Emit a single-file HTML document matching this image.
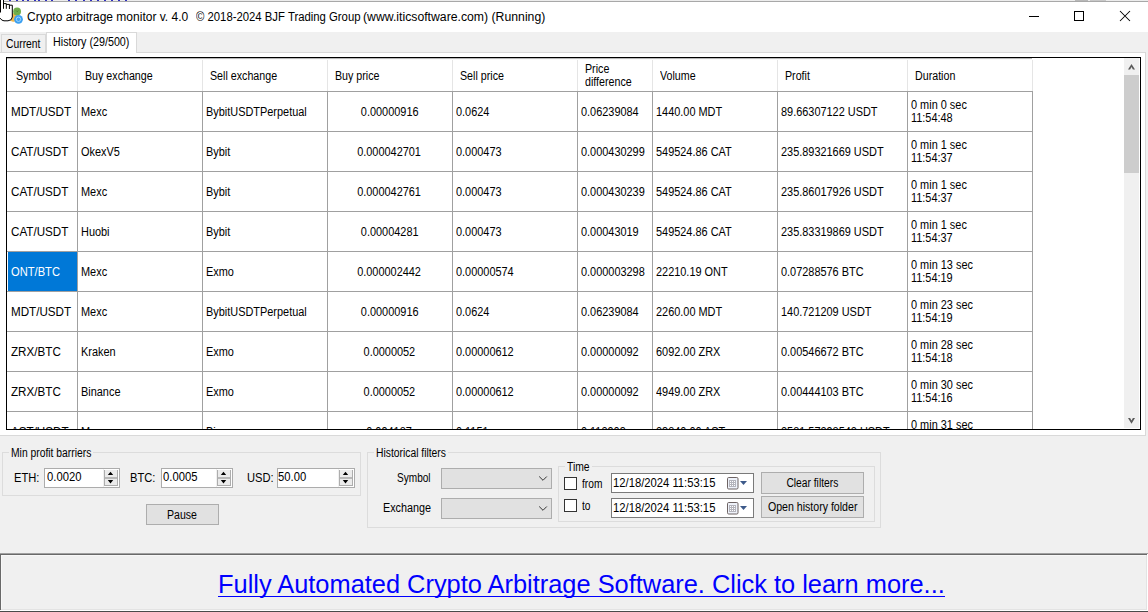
<!DOCTYPE html><html><head><meta charset="utf-8"><style>
*{margin:0;padding:0;box-sizing:border-box}
html,body{width:1148px;height:612px;overflow:hidden;background:#f0f0f0;font-family:"Liberation Sans", sans-serif;color:#000}
.a{position:absolute}
</style></head><body>

<div class="a" style="left:0px;top:0px;width:1148px;height:32px;background:#fff;"></div>
<div class="a" style="left:0px;top:1px;width:1148px;height:1px;background:#c8c8c8;"></div>
<div class="a" style="left:27px;top:11px;line-height:12px;font-size:12px;color:#000;white-space:pre;transform:scaleX(1.0);transform-origin:0 0;">Crypto arbitrage monitor v. 4.0</div>
<div class="a" style="left:196px;top:11px;line-height:12px;font-size:12px;color:#000;white-space:pre;transform:scaleX(0.944);transform-origin:0 0;">© 2018-2024 BJF Trading Group</div>
<div class="a" style="left:363px;top:11px;line-height:12px;font-size:12px;color:#000;white-space:pre;transform:scaleX(1.02);transform-origin:0 0;">(www.iticsoftware.com) (Running)</div>
<div class="a" style="left:1029px;top:16px;width:10px;height:1px;background:#000;"></div>
<div class="a" style="left:1074px;top:11px;width:10px;height:10px;border:1px solid #000;"></div>
<svg class="a" style="left:1119px;top:10px" width="12" height="12"><path d="M1 1L11 11M11 1L1 11" stroke="#000" stroke-width="1.05"/></svg>
<div class="a" style="left:0px;top:0px;width:1148px;height:1px;background:#ececec;"></div>
<div class="a" style="left:0px;top:1px;width:1148px;height:1px;background:#a8a8a8;"></div>
<div class="a" style="left:9px;top:0px;width:2px;height:1px;background:#3030c0;"></div>
<div class="a" style="left:16px;top:0px;width:2px;height:1px;background:#3030c0;"></div>
<div class="a" style="left:22px;top:0px;width:2px;height:1px;background:#3030c0;"></div>
<div class="a" style="left:27px;top:0px;width:2px;height:1px;background:#3030c0;"></div>
<div class="a" style="left:34px;top:0px;width:2px;height:1px;background:#3030c0;"></div>
<div class="a" style="left:38px;top:0px;width:2px;height:1px;background:#3030c0;"></div>
<div class="a" style="left:45px;top:0px;width:2px;height:1px;background:#3030c0;"></div>
<div class="a" style="left:51px;top:0px;width:2px;height:1px;background:#3030c0;"></div>
<div class="a" style="left:68px;top:0px;width:2px;height:1px;background:#3030c0;"></div>
<div class="a" style="left:75px;top:0px;width:2px;height:1px;background:#3030c0;"></div>
<div class="a" style="left:83px;top:0px;width:2px;height:1px;background:#3030c0;"></div>
<div class="a" style="left:90px;top:0px;width:2px;height:1px;background:#3030c0;"></div>
<div class="a" style="left:97px;top:0px;width:2px;height:1px;background:#3030c0;"></div>
<div class="a" style="left:104px;top:0px;width:2px;height:1px;background:#3030c0;"></div>
<div class="a" style="left:111px;top:0px;width:2px;height:1px;background:#3030c0;"></div>
<div class="a" style="left:118px;top:0px;width:2px;height:1px;background:#3030c0;"></div>
<div class="a" style="left:125px;top:0px;width:2px;height:1px;background:#3030c0;"></div>
<div class="a" style="left:1075px;top:0px;width:13px;height:1px;background:#b8b8b8;"></div>
<div class="a" style="left:1090px;top:0px;width:16px;height:1px;background:#c8c8c8;"></div>
<svg class="a" style="left:0;top:0" width="26" height="26">
<circle cx="13.5" cy="17.5" r="4.2" fill="#f2b84a"/>
<circle cx="17.1" cy="11.5" r="3.9" fill="#6fae4a"/>
<path d="M16 10.5l1.2 1.2l1.2-1.2" stroke="#4a7a30" stroke-width="0.8" fill="none"/>
<circle cx="18.5" cy="19.3" r="4.4" fill="#3ca0f0"/>
<circle cx="18.5" cy="19.3" r="2.2" fill="none" stroke="#a8d8ff" stroke-width="0.9"/>
<path d="M0 0H3.5V3.6H6.3V4.4H9.4V5.2H12.3V17Q12 20.6 8 20.8H4Q2 20.8 0 18.2Z" fill="#fff"/>
<path d="M0.5 0V12.5 M3.5 0V8.8 M3.5 3.6H6.3V8.8 M6.3 4.4H9.4V9 M9.4 5.2H12.3V17 Q12 20.6 8 20.8 H4 Q2 20.8 0 18.2" stroke="#000" stroke-width="1" fill="none"/>
</svg>
<div class="a" style="left:0px;top:52px;width:1146px;height:384px;background:#fff;border:1px solid #d9d9d9;border-left:none"></div>
<div class="a" style="left:1px;top:34px;width:45px;height:18px;background:#f0f0f0;border:1px solid #d9d9d9;border-bottom:none"></div>
<div class="a" style="left:6px;top:38px;line-height:12px;font-size:12px;color:#000;white-space:pre;transform:scaleX(0.86);transform-origin:0 0;">Current</div>
<div class="a" style="left:46px;top:32px;width:91px;height:21px;background:#fff;border:1px solid #d9d9d9;border-bottom:none"></div>
<div class="a" style="left:53px;top:36px;line-height:12px;font-size:12px;color:#000;white-space:pre;transform:scaleX(0.895);transform-origin:0 0;">History (29/500)</div>
<div class="a" style="left:6px;top:57px;width:1135px;height:373px;background:#fff;border:1px solid #000"></div>
<div class="a" style="left:7px;top:58px;width:1025px;height:1px;background:#b8b8b8;"></div>
<div class="a" style="left:7px;top:59px;width:1025px;height:1px;background:#fafafa;"></div>
<div class="a" style="left:77px;top:60px;width:1px;height:31px;background:#e5e5e5;"></div>
<div class="a" style="left:77px;top:91px;width:1px;height:338px;background:#a0a0a0;"></div>
<div class="a" style="left:202px;top:60px;width:1px;height:31px;background:#e5e5e5;"></div>
<div class="a" style="left:202px;top:91px;width:1px;height:338px;background:#a0a0a0;"></div>
<div class="a" style="left:327px;top:60px;width:1px;height:31px;background:#e5e5e5;"></div>
<div class="a" style="left:327px;top:91px;width:1px;height:338px;background:#a0a0a0;"></div>
<div class="a" style="left:452px;top:60px;width:1px;height:31px;background:#e5e5e5;"></div>
<div class="a" style="left:452px;top:91px;width:1px;height:338px;background:#a0a0a0;"></div>
<div class="a" style="left:577px;top:60px;width:1px;height:31px;background:#e5e5e5;"></div>
<div class="a" style="left:577px;top:91px;width:1px;height:338px;background:#a0a0a0;"></div>
<div class="a" style="left:652px;top:60px;width:1px;height:31px;background:#e5e5e5;"></div>
<div class="a" style="left:652px;top:91px;width:1px;height:338px;background:#a0a0a0;"></div>
<div class="a" style="left:777px;top:60px;width:1px;height:31px;background:#e5e5e5;"></div>
<div class="a" style="left:777px;top:91px;width:1px;height:338px;background:#a0a0a0;"></div>
<div class="a" style="left:907px;top:60px;width:1px;height:31px;background:#e5e5e5;"></div>
<div class="a" style="left:907px;top:91px;width:1px;height:338px;background:#a0a0a0;"></div>
<div class="a" style="left:1032px;top:60px;width:1px;height:31px;background:#e5e5e5;"></div>
<div class="a" style="left:1032px;top:91px;width:1px;height:338px;background:#a0a0a0;"></div>
<div class="a" style="left:7px;top:91px;width:1026px;height:1px;background:#a0a0a0;"></div>
<div class="a" style="left:7px;top:131px;width:1026px;height:1px;background:#a0a0a0;"></div>
<div class="a" style="left:7px;top:171px;width:1026px;height:1px;background:#a0a0a0;"></div>
<div class="a" style="left:7px;top:211px;width:1026px;height:1px;background:#a0a0a0;"></div>
<div class="a" style="left:7px;top:251px;width:1026px;height:1px;background:#a0a0a0;"></div>
<div class="a" style="left:7px;top:291px;width:1026px;height:1px;background:#a0a0a0;"></div>
<div class="a" style="left:7px;top:331px;width:1026px;height:1px;background:#a0a0a0;"></div>
<div class="a" style="left:7px;top:371px;width:1026px;height:1px;background:#a0a0a0;"></div>
<div class="a" style="left:7px;top:411px;width:1026px;height:1px;background:#a0a0a0;"></div>
<div class="a" style="left:16px;top:70px;line-height:12px;font-size:12px;color:#000;white-space:pre;transform:scaleX(0.89);transform-origin:0 0;">Symbol</div>
<div class="a" style="left:85px;top:70px;line-height:12px;font-size:12px;color:#000;white-space:pre;transform:scaleX(0.89);transform-origin:0 0;">Buy exchange</div>
<div class="a" style="left:210px;top:70px;line-height:12px;font-size:12px;color:#000;white-space:pre;transform:scaleX(0.89);transform-origin:0 0;">Sell exchange</div>
<div class="a" style="left:335px;top:70px;line-height:12px;font-size:12px;color:#000;white-space:pre;transform:scaleX(0.89);transform-origin:0 0;">Buy price</div>
<div class="a" style="left:460px;top:70px;line-height:12px;font-size:12px;color:#000;white-space:pre;transform:scaleX(0.89);transform-origin:0 0;">Sell price</div>
<div class="a" style="left:585px;top:63px;line-height:13px;font-size:12px;color:#000;white-space:pre;transform:scaleX(0.89);transform-origin:0 0;">Price
difference</div>
<div class="a" style="left:660px;top:70px;line-height:12px;font-size:12px;color:#000;white-space:pre;transform:scaleX(0.89);transform-origin:0 0;">Volume</div>
<div class="a" style="left:785px;top:70px;line-height:12px;font-size:12px;color:#000;white-space:pre;transform:scaleX(0.89);transform-origin:0 0;">Profit</div>
<div class="a" style="left:915px;top:70px;line-height:12px;font-size:12px;color:#000;white-space:pre;transform:scaleX(0.89);transform-origin:0 0;">Duration</div>
<div class="a" style="left:8px;top:252px;width:69px;height:39px;background:#0078d7;"></div>
<div class="a" style="left:7px;top:58px;width:1133px;height:371px;overflow:hidden"><div class="a" style="left:-7px;top:-58px;width:1148px;height:612px">
<div class="a" style="left:10.5px;top:106px;line-height:12px;font-size:12px;color:#000;white-space:pre;transform:scaleX(0.97);transform-origin:0 0;">MDT/USDT</div>
<div class="a" style="left:81px;top:106px;line-height:12px;font-size:12px;color:#000;white-space:pre;transform:scaleX(0.91);transform-origin:0 0;">Mexc</div>
<div class="a" style="left:206px;top:106px;line-height:12px;font-size:12px;color:#000;white-space:pre;transform:scaleX(0.91);transform-origin:0 0;">BybitUSDTPerpetual</div>
<div class="a" style="left:327px;top:106px;width:125px;text-align:center;line-height:12px;font-size:12px;color:#000;white-space:pre;"><span style="display:inline-block;transform:scaleX(0.91);transform-origin:50% 0">0.00000916</span></div>
<div class="a" style="left:456px;top:106px;line-height:12px;font-size:12px;color:#000;white-space:pre;transform:scaleX(0.91);transform-origin:0 0;">0.0624</div>
<div class="a" style="left:581px;top:106px;line-height:12px;font-size:12px;color:#000;white-space:pre;transform:scaleX(0.91);transform-origin:0 0;">0.06239084</div>
<div class="a" style="left:656px;top:106px;line-height:12px;font-size:12px;color:#000;white-space:pre;transform:scaleX(0.91);transform-origin:0 0;">1440.00 MDT</div>
<div class="a" style="left:781px;top:106px;line-height:12px;font-size:12px;color:#000;white-space:pre;transform:scaleX(0.91);transform-origin:0 0;">89.66307122 USDT</div>
<div class="a" style="left:911px;top:99px;line-height:13px;font-size:12px;color:#000;white-space:pre;transform:scaleX(0.91);transform-origin:0 0;">0 min 0 sec
11:54:48</div>
<div class="a" style="left:10.5px;top:146px;line-height:12px;font-size:12px;color:#000;white-space:pre;transform:scaleX(0.97);transform-origin:0 0;">CAT/USDT</div>
<div class="a" style="left:81px;top:146px;line-height:12px;font-size:12px;color:#000;white-space:pre;transform:scaleX(0.91);transform-origin:0 0;">OkexV5</div>
<div class="a" style="left:206px;top:146px;line-height:12px;font-size:12px;color:#000;white-space:pre;transform:scaleX(0.91);transform-origin:0 0;">Bybit</div>
<div class="a" style="left:327px;top:146px;width:125px;text-align:center;line-height:12px;font-size:12px;color:#000;white-space:pre;"><span style="display:inline-block;transform:scaleX(0.91);transform-origin:50% 0">0.000042701</span></div>
<div class="a" style="left:456px;top:146px;line-height:12px;font-size:12px;color:#000;white-space:pre;transform:scaleX(0.91);transform-origin:0 0;">0.000473</div>
<div class="a" style="left:581px;top:146px;line-height:12px;font-size:12px;color:#000;white-space:pre;transform:scaleX(0.91);transform-origin:0 0;">0.000430299</div>
<div class="a" style="left:656px;top:146px;line-height:12px;font-size:12px;color:#000;white-space:pre;transform:scaleX(0.91);transform-origin:0 0;">549524.86 CAT</div>
<div class="a" style="left:781px;top:146px;line-height:12px;font-size:12px;color:#000;white-space:pre;transform:scaleX(0.91);transform-origin:0 0;">235.89321669 USDT</div>
<div class="a" style="left:911px;top:139px;line-height:13px;font-size:12px;color:#000;white-space:pre;transform:scaleX(0.91);transform-origin:0 0;">0 min 1 sec
11:54:37</div>
<div class="a" style="left:10.5px;top:186px;line-height:12px;font-size:12px;color:#000;white-space:pre;transform:scaleX(0.97);transform-origin:0 0;">CAT/USDT</div>
<div class="a" style="left:81px;top:186px;line-height:12px;font-size:12px;color:#000;white-space:pre;transform:scaleX(0.91);transform-origin:0 0;">Mexc</div>
<div class="a" style="left:206px;top:186px;line-height:12px;font-size:12px;color:#000;white-space:pre;transform:scaleX(0.91);transform-origin:0 0;">Bybit</div>
<div class="a" style="left:327px;top:186px;width:125px;text-align:center;line-height:12px;font-size:12px;color:#000;white-space:pre;"><span style="display:inline-block;transform:scaleX(0.91);transform-origin:50% 0">0.000042761</span></div>
<div class="a" style="left:456px;top:186px;line-height:12px;font-size:12px;color:#000;white-space:pre;transform:scaleX(0.91);transform-origin:0 0;">0.000473</div>
<div class="a" style="left:581px;top:186px;line-height:12px;font-size:12px;color:#000;white-space:pre;transform:scaleX(0.91);transform-origin:0 0;">0.000430239</div>
<div class="a" style="left:656px;top:186px;line-height:12px;font-size:12px;color:#000;white-space:pre;transform:scaleX(0.91);transform-origin:0 0;">549524.86 CAT</div>
<div class="a" style="left:781px;top:186px;line-height:12px;font-size:12px;color:#000;white-space:pre;transform:scaleX(0.91);transform-origin:0 0;">235.86017926 USDT</div>
<div class="a" style="left:911px;top:179px;line-height:13px;font-size:12px;color:#000;white-space:pre;transform:scaleX(0.91);transform-origin:0 0;">0 min 1 sec
11:54:37</div>
<div class="a" style="left:10.5px;top:226px;line-height:12px;font-size:12px;color:#000;white-space:pre;transform:scaleX(0.97);transform-origin:0 0;">CAT/USDT</div>
<div class="a" style="left:81px;top:226px;line-height:12px;font-size:12px;color:#000;white-space:pre;transform:scaleX(0.91);transform-origin:0 0;">Huobi</div>
<div class="a" style="left:206px;top:226px;line-height:12px;font-size:12px;color:#000;white-space:pre;transform:scaleX(0.91);transform-origin:0 0;">Bybit</div>
<div class="a" style="left:327px;top:226px;width:125px;text-align:center;line-height:12px;font-size:12px;color:#000;white-space:pre;"><span style="display:inline-block;transform:scaleX(0.91);transform-origin:50% 0">0.00004281</span></div>
<div class="a" style="left:456px;top:226px;line-height:12px;font-size:12px;color:#000;white-space:pre;transform:scaleX(0.91);transform-origin:0 0;">0.000473</div>
<div class="a" style="left:581px;top:226px;line-height:12px;font-size:12px;color:#000;white-space:pre;transform:scaleX(0.91);transform-origin:0 0;">0.00043019</div>
<div class="a" style="left:656px;top:226px;line-height:12px;font-size:12px;color:#000;white-space:pre;transform:scaleX(0.91);transform-origin:0 0;">549524.86 CAT</div>
<div class="a" style="left:781px;top:226px;line-height:12px;font-size:12px;color:#000;white-space:pre;transform:scaleX(0.91);transform-origin:0 0;">235.83319869 USDT</div>
<div class="a" style="left:911px;top:219px;line-height:13px;font-size:12px;color:#000;white-space:pre;transform:scaleX(0.91);transform-origin:0 0;">0 min 1 sec
11:54:37</div>
<div class="a" style="left:10.5px;top:266px;line-height:12px;font-size:12px;color:#fff;white-space:pre;transform:scaleX(0.93);transform-origin:0 0;">ONT/BTC</div>
<div class="a" style="left:81px;top:266px;line-height:12px;font-size:12px;color:#000;white-space:pre;transform:scaleX(0.91);transform-origin:0 0;">Mexc</div>
<div class="a" style="left:206px;top:266px;line-height:12px;font-size:12px;color:#000;white-space:pre;transform:scaleX(0.91);transform-origin:0 0;">Exmo</div>
<div class="a" style="left:327px;top:266px;width:125px;text-align:center;line-height:12px;font-size:12px;color:#000;white-space:pre;"><span style="display:inline-block;transform:scaleX(0.91);transform-origin:50% 0">0.000002442</span></div>
<div class="a" style="left:456px;top:266px;line-height:12px;font-size:12px;color:#000;white-space:pre;transform:scaleX(0.91);transform-origin:0 0;">0.00000574</div>
<div class="a" style="left:581px;top:266px;line-height:12px;font-size:12px;color:#000;white-space:pre;transform:scaleX(0.91);transform-origin:0 0;">0.000003298</div>
<div class="a" style="left:656px;top:266px;line-height:12px;font-size:12px;color:#000;white-space:pre;transform:scaleX(0.91);transform-origin:0 0;">22210.19 ONT</div>
<div class="a" style="left:781px;top:266px;line-height:12px;font-size:12px;color:#000;white-space:pre;transform:scaleX(0.91);transform-origin:0 0;">0.07288576 BTC</div>
<div class="a" style="left:911px;top:259px;line-height:13px;font-size:12px;color:#000;white-space:pre;transform:scaleX(0.91);transform-origin:0 0;">0 min 13 sec
11:54:19</div>
<div class="a" style="left:10.5px;top:306px;line-height:12px;font-size:12px;color:#000;white-space:pre;transform:scaleX(0.97);transform-origin:0 0;">MDT/USDT</div>
<div class="a" style="left:81px;top:306px;line-height:12px;font-size:12px;color:#000;white-space:pre;transform:scaleX(0.91);transform-origin:0 0;">Mexc</div>
<div class="a" style="left:206px;top:306px;line-height:12px;font-size:12px;color:#000;white-space:pre;transform:scaleX(0.91);transform-origin:0 0;">BybitUSDTPerpetual</div>
<div class="a" style="left:327px;top:306px;width:125px;text-align:center;line-height:12px;font-size:12px;color:#000;white-space:pre;"><span style="display:inline-block;transform:scaleX(0.91);transform-origin:50% 0">0.00000916</span></div>
<div class="a" style="left:456px;top:306px;line-height:12px;font-size:12px;color:#000;white-space:pre;transform:scaleX(0.91);transform-origin:0 0;">0.0624</div>
<div class="a" style="left:581px;top:306px;line-height:12px;font-size:12px;color:#000;white-space:pre;transform:scaleX(0.91);transform-origin:0 0;">0.06239084</div>
<div class="a" style="left:656px;top:306px;line-height:12px;font-size:12px;color:#000;white-space:pre;transform:scaleX(0.91);transform-origin:0 0;">2260.00 MDT</div>
<div class="a" style="left:781px;top:306px;line-height:12px;font-size:12px;color:#000;white-space:pre;transform:scaleX(0.91);transform-origin:0 0;">140.721209 USDT</div>
<div class="a" style="left:911px;top:299px;line-height:13px;font-size:12px;color:#000;white-space:pre;transform:scaleX(0.91);transform-origin:0 0;">0 min 23 sec
11:54:19</div>
<div class="a" style="left:10.5px;top:346px;line-height:12px;font-size:12px;color:#000;white-space:pre;transform:scaleX(0.97);transform-origin:0 0;">ZRX/BTC</div>
<div class="a" style="left:81px;top:346px;line-height:12px;font-size:12px;color:#000;white-space:pre;transform:scaleX(0.91);transform-origin:0 0;">Kraken</div>
<div class="a" style="left:206px;top:346px;line-height:12px;font-size:12px;color:#000;white-space:pre;transform:scaleX(0.91);transform-origin:0 0;">Exmo</div>
<div class="a" style="left:327px;top:346px;width:125px;text-align:center;line-height:12px;font-size:12px;color:#000;white-space:pre;"><span style="display:inline-block;transform:scaleX(0.91);transform-origin:50% 0">0.0000052</span></div>
<div class="a" style="left:456px;top:346px;line-height:12px;font-size:12px;color:#000;white-space:pre;transform:scaleX(0.91);transform-origin:0 0;">0.00000612</div>
<div class="a" style="left:581px;top:346px;line-height:12px;font-size:12px;color:#000;white-space:pre;transform:scaleX(0.91);transform-origin:0 0;">0.00000092</div>
<div class="a" style="left:656px;top:346px;line-height:12px;font-size:12px;color:#000;white-space:pre;transform:scaleX(0.91);transform-origin:0 0;">6092.00 ZRX</div>
<div class="a" style="left:781px;top:346px;line-height:12px;font-size:12px;color:#000;white-space:pre;transform:scaleX(0.91);transform-origin:0 0;">0.00546672 BTC</div>
<div class="a" style="left:911px;top:339px;line-height:13px;font-size:12px;color:#000;white-space:pre;transform:scaleX(0.91);transform-origin:0 0;">0 min 28 sec
11:54:18</div>
<div class="a" style="left:10.5px;top:386px;line-height:12px;font-size:12px;color:#000;white-space:pre;transform:scaleX(0.97);transform-origin:0 0;">ZRX/BTC</div>
<div class="a" style="left:81px;top:386px;line-height:12px;font-size:12px;color:#000;white-space:pre;transform:scaleX(0.91);transform-origin:0 0;">Binance</div>
<div class="a" style="left:206px;top:386px;line-height:12px;font-size:12px;color:#000;white-space:pre;transform:scaleX(0.91);transform-origin:0 0;">Exmo</div>
<div class="a" style="left:327px;top:386px;width:125px;text-align:center;line-height:12px;font-size:12px;color:#000;white-space:pre;"><span style="display:inline-block;transform:scaleX(0.91);transform-origin:50% 0">0.0000052</span></div>
<div class="a" style="left:456px;top:386px;line-height:12px;font-size:12px;color:#000;white-space:pre;transform:scaleX(0.91);transform-origin:0 0;">0.00000612</div>
<div class="a" style="left:581px;top:386px;line-height:12px;font-size:12px;color:#000;white-space:pre;transform:scaleX(0.91);transform-origin:0 0;">0.00000092</div>
<div class="a" style="left:656px;top:386px;line-height:12px;font-size:12px;color:#000;white-space:pre;transform:scaleX(0.91);transform-origin:0 0;">4949.00 ZRX</div>
<div class="a" style="left:781px;top:386px;line-height:12px;font-size:12px;color:#000;white-space:pre;transform:scaleX(0.91);transform-origin:0 0;">0.00444103 BTC</div>
<div class="a" style="left:911px;top:379px;line-height:13px;font-size:12px;color:#000;white-space:pre;transform:scaleX(0.91);transform-origin:0 0;">0 min 30 sec
11:54:16</div>
<div class="a" style="left:10.5px;top:426px;line-height:12px;font-size:12px;color:#000;white-space:pre;transform:scaleX(0.97);transform-origin:0 0;">AST/USDT</div>
<div class="a" style="left:81px;top:426px;line-height:12px;font-size:12px;color:#000;white-space:pre;transform:scaleX(0.91);transform-origin:0 0;">Mexc</div>
<div class="a" style="left:206px;top:426px;line-height:12px;font-size:12px;color:#000;white-space:pre;transform:scaleX(0.91);transform-origin:0 0;">Binance</div>
<div class="a" style="left:327px;top:426px;width:125px;text-align:center;line-height:12px;font-size:12px;color:#000;white-space:pre;"><span style="display:inline-block;transform:scaleX(0.91);transform-origin:50% 0">0.094187</span></div>
<div class="a" style="left:456px;top:426px;line-height:12px;font-size:12px;color:#000;white-space:pre;transform:scaleX(0.91);transform-origin:0 0;">0.1151</div>
<div class="a" style="left:581px;top:426px;line-height:12px;font-size:12px;color:#000;white-space:pre;transform:scaleX(0.91);transform-origin:0 0;">0.112903</div>
<div class="a" style="left:656px;top:426px;line-height:12px;font-size:12px;color:#000;white-space:pre;transform:scaleX(0.91);transform-origin:0 0;">23840.00 AST</div>
<div class="a" style="left:781px;top:426px;line-height:12px;font-size:12px;color:#000;white-space:pre;transform:scaleX(0.91);transform-origin:0 0;">2581.57298542 USDT</div>
<div class="a" style="left:911px;top:419px;line-height:13px;font-size:12px;color:#000;white-space:pre;transform:scaleX(0.91);transform-origin:0 0;">0 min 31 sec
11:54:14</div>
</div></div>
<div class="a" style="left:1124px;top:58px;width:15px;height:370px;background:#f0f0f0;"></div>
<div class="a" style="left:1124px;top:75px;width:15px;height:98px;background:#cdcdcd;"></div>
<svg class="a" style="left:1124px;top:62px" width="15" height="9"><path d="M4 7.6L7.5 1.9L11 7.6L8.9 7.6L7.5 5.1L6.1 7.6Z" fill="#5a5a5a"/></svg>
<svg class="a" style="left:1124px;top:416px" width="15" height="9"><path d="M4 2.1L7.5 7.8L11 2.1L8.9 2.1L7.5 4.6L6.1 2.1Z" fill="#5a5a5a"/></svg>
<div class="a" style="left:2px;top:452px;width:359px;height:44px;border:1px solid #dcdcdc;"></div>
<div class="a" style="left:9px;top:446px;width:84px;height:12px;background:#f0f0f0;"></div>
<div class="a" style="left:11px;top:447px;line-height:12px;font-size:12px;color:#000;white-space:pre;transform:scaleX(0.86);transform-origin:0 0;">Min profit barriers</div>
<div class="a" style="left:14px;top:472px;line-height:12px;font-size:12px;color:#000;white-space:pre;transform:scaleX(0.93);transform-origin:0 0;">ETH:</div>
<div class="a" style="left:44px;top:468px;width:76px;height:20px;background:#fff;border:1px solid #acacac;"></div>
<div class="a" style="left:47px;top:471px;line-height:12px;font-size:12.5px;color:#000;white-space:pre;transform:scaleX(0.9);transform-origin:0 0;">0.0020</div>
<div class="a" style="left:103px;top:469px;width:1px;height:18px;background:#f0f0f0;"></div>
<div class="a" style="left:104px;top:470px;width:14px;height:16px;background:#ebebeb;border:1px solid #adadad;border-top:none"></div>
<div class="a" style="left:105px;top:477px;width:12px;height:2px;background:#b8b8b8;"></div>
<svg class="a" style="left:104px;top:470px" width="14" height="16"><path d="M3.8 5H9.2L6.5 1.8Z M3.8 10H9.2L6.5 13.5Z" fill="#000"/></svg>
<div class="a" style="left:130px;top:472px;line-height:12px;font-size:12px;color:#000;white-space:pre;transform:scaleX(0.93);transform-origin:0 0;">BTC:</div>
<div class="a" style="left:161px;top:468px;width:72px;height:20px;background:#fff;border:1px solid #acacac;"></div>
<div class="a" style="left:163px;top:471px;line-height:12px;font-size:12.5px;color:#000;white-space:pre;transform:scaleX(0.9);transform-origin:0 0;">0.0005</div>
<div class="a" style="left:216px;top:469px;width:1px;height:18px;background:#f0f0f0;"></div>
<div class="a" style="left:217px;top:470px;width:14px;height:16px;background:#ebebeb;border:1px solid #adadad;border-top:none"></div>
<div class="a" style="left:218px;top:477px;width:12px;height:2px;background:#b8b8b8;"></div>
<svg class="a" style="left:217px;top:470px" width="14" height="16"><path d="M3.8 5H9.2L6.5 1.8Z M3.8 10H9.2L6.5 13.5Z" fill="#000"/></svg>
<div class="a" style="left:247px;top:472px;line-height:12px;font-size:12px;color:#000;white-space:pre;transform:scaleX(0.93);transform-origin:0 0;">USD:</div>
<div class="a" style="left:277px;top:468px;width:78px;height:20px;background:#fff;border:1px solid #acacac;"></div>
<div class="a" style="left:278px;top:471px;line-height:12px;font-size:12.5px;color:#000;white-space:pre;transform:scaleX(0.9);transform-origin:0 0;">50.00</div>
<div class="a" style="left:338px;top:469px;width:1px;height:18px;background:#f0f0f0;"></div>
<div class="a" style="left:339px;top:470px;width:14px;height:16px;background:#ebebeb;border:1px solid #adadad;border-top:none"></div>
<div class="a" style="left:340px;top:477px;width:12px;height:2px;background:#b8b8b8;"></div>
<svg class="a" style="left:339px;top:470px" width="14" height="16"><path d="M3.8 5H9.2L6.5 1.8Z M3.8 10H9.2L6.5 13.5Z" fill="#000"/></svg>
<div class="a" style="left:146px;top:504px;width:73px;height:21px;background:#e1e1e1;border:1px solid #adadad;"></div>
<div class="a" style="left:146px;top:509px;width:73px;text-align:center;line-height:12px;font-size:12px;color:#000;white-space:pre;"><span style="display:inline-block;transform:scaleX(0.88);transform-origin:50% 0">Pause</span></div>
<div class="a" style="left:367px;top:452px;width:514px;height:76px;border:1px solid #dcdcdc;"></div>
<div class="a" style="left:374px;top:446px;width:74px;height:12px;background:#f0f0f0;"></div>
<div class="a" style="left:376px;top:447px;line-height:12px;font-size:12px;color:#000;white-space:pre;transform:scaleX(0.86);transform-origin:0 0;">Historical filters</div>
<div class="a" style="left:397px;top:472px;line-height:12px;font-size:12px;color:#000;white-space:pre;transform:scaleX(0.84);transform-origin:0 0;">Symbol</div>
<div class="a" style="left:383px;top:502px;line-height:12px;font-size:12px;color:#000;white-space:pre;transform:scaleX(0.9);transform-origin:0 0;">Exchange</div>
<div class="a" style="left:441px;top:468px;width:111px;height:21px;background:#e1e1e1;border:1px solid #adadad;"></div>
<svg class="a" style="left:538px;top:475px" width="10" height="7"><path d="M1.2 1.5L5 5.3L8.8 1.5" stroke="#333" stroke-width="1" fill="none"/></svg>
<div class="a" style="left:441px;top:498px;width:111px;height:21px;background:#e1e1e1;border:1px solid #adadad;"></div>
<svg class="a" style="left:538px;top:505px" width="10" height="7"><path d="M1.2 1.5L5 5.3L8.8 1.5" stroke="#333" stroke-width="1" fill="none"/></svg>
<div class="a" style="left:558px;top:466px;width:317px;height:56px;border:1px solid #dcdcdc;"></div>
<div class="a" style="left:565px;top:460px;width:27px;height:12px;background:#f0f0f0;"></div>
<div class="a" style="left:567px;top:461px;line-height:12px;font-size:12px;color:#000;white-space:pre;transform:scaleX(0.86);transform-origin:0 0;">Time</div>
<div class="a" style="left:564px;top:477px;width:13px;height:13px;background:#fff;border:1px solid #333;"></div>
<div class="a" style="left:582px;top:478px;line-height:12px;font-size:12px;color:#000;white-space:pre;transform:scaleX(0.85);transform-origin:0 0;">from</div>
<div class="a" style="left:564px;top:499px;width:13px;height:13px;background:#fff;border:1px solid #333;"></div>
<div class="a" style="left:582px;top:500px;line-height:12px;font-size:12px;color:#000;white-space:pre;transform:scaleX(0.85);transform-origin:0 0;">to</div>
<div class="a" style="left:611px;top:473px;width:143px;height:20px;background:#fff;border:1px solid #7a7a7a;"></div>
<div class="a" style="left:613px;top:477px;line-height:12px;font-size:12.5px;color:#000;white-space:pre;transform:scaleX(0.9);transform-origin:0 0;">12/18/2024 11:53:15</div>
<svg class="a" style="left:727px;top:477px" width="12" height="13"><rect x="0.5" y="0.5" width="10.5" height="11.5" rx="1.2" fill="#eef2fa" stroke="#6d6363"/><rect x="2" y="3" width="7" height="7" fill="#b4b4bc"/><rect x="3" y="4" width="1" height="1" fill="#fff"/><rect x="3" y="6" width="1" height="1" fill="#fff"/><rect x="3" y="8" width="1" height="1" fill="#fff"/><rect x="5" y="4" width="1" height="1" fill="#fff"/><rect x="5" y="6" width="1" height="1" fill="#fff"/><rect x="5" y="8" width="1" height="1" fill="#fff"/><rect x="7" y="4" width="1" height="1" fill="#fff"/><rect x="7" y="6" width="1" height="1" fill="#fff"/><rect x="7" y="8" width="1" height="1" fill="#fff"/></svg>
<svg class="a" style="left:740px;top:481px" width="8" height="5"><path d="M0 0L7 0L3.5 4Z" fill="#3d5a8a"/></svg>
<div class="a" style="left:611px;top:498px;width:143px;height:20px;background:#fff;border:1px solid #7a7a7a;"></div>
<div class="a" style="left:613px;top:502px;line-height:12px;font-size:12.5px;color:#000;white-space:pre;transform:scaleX(0.9);transform-origin:0 0;">12/18/2024 11:53:15</div>
<svg class="a" style="left:727px;top:502px" width="12" height="13"><rect x="0.5" y="0.5" width="10.5" height="11.5" rx="1.2" fill="#eef2fa" stroke="#6d6363"/><rect x="2" y="3" width="7" height="7" fill="#b4b4bc"/><rect x="3" y="4" width="1" height="1" fill="#fff"/><rect x="3" y="6" width="1" height="1" fill="#fff"/><rect x="3" y="8" width="1" height="1" fill="#fff"/><rect x="5" y="4" width="1" height="1" fill="#fff"/><rect x="5" y="6" width="1" height="1" fill="#fff"/><rect x="5" y="8" width="1" height="1" fill="#fff"/><rect x="7" y="4" width="1" height="1" fill="#fff"/><rect x="7" y="6" width="1" height="1" fill="#fff"/><rect x="7" y="8" width="1" height="1" fill="#fff"/></svg>
<svg class="a" style="left:740px;top:506px" width="8" height="5"><path d="M0 0L7 0L3.5 4Z" fill="#3d5a8a"/></svg>
<div class="a" style="left:761px;top:472px;width:103px;height:22px;background:#e1e1e1;border:1px solid #adadad;"></div>
<div class="a" style="left:761px;top:477px;width:103px;text-align:center;line-height:12px;font-size:12px;color:#000;white-space:pre;"><span style="display:inline-block;transform:scaleX(0.855);transform-origin:50% 0">Clear filters</span></div>
<div class="a" style="left:761px;top:496px;width:103px;height:22px;background:#e1e1e1;border:1px solid #adadad;"></div>
<div class="a" style="left:761px;top:501px;width:103px;text-align:center;line-height:12px;font-size:12px;color:#000;white-space:pre;"><span style="display:inline-block;transform:scaleX(0.882);transform-origin:50% 0">Open history folder</span></div>
<div class="a" style="left:0px;top:553px;width:1148px;height:1px;background:#a0a0a0;"></div>
<div class="a" style="left:0px;top:554px;width:1148px;height:1px;background:#696969;"></div>
<div class="a" style="left:0px;top:554px;width:1px;height:57px;background:#696969;"></div>
<div class="a" style="left:1px;top:555px;width:1146px;height:1px;background:#f8f8f8;"></div>
<div class="a" style="left:1px;top:555px;width:1px;height:55px;background:#f8f8f8;"></div>
<div class="a" style="left:1146px;top:555px;width:1px;height:55px;background:#e3e3e3;"></div>
<div class="a" style="left:1px;top:609px;width:1146px;height:1px;background:#e3e3e3;"></div>
<div class="a" style="left:1147px;top:554px;width:1px;height:57px;background:#fff;"></div>
<div class="a" style="left:0px;top:610px;width:1148px;height:1px;background:#fff;"></div>
<div class="a" style="left:0px;top:611px;width:1148px;height:1px;background:#4a4a4a;"></div>
<div class="a" style="left:218px;top:572px;line-height:25px;font-size:25.4px;color:#0000ff;white-space:pre;transform:scaleX(1.0);transform-origin:0 0;">Fully Automated Crypto Arbitrage Software. Click to learn more...</div>
<div class="a" style="left:218px;top:596px;width:727px;height:1px;background:#0000ff;"></div>
</body></html>
